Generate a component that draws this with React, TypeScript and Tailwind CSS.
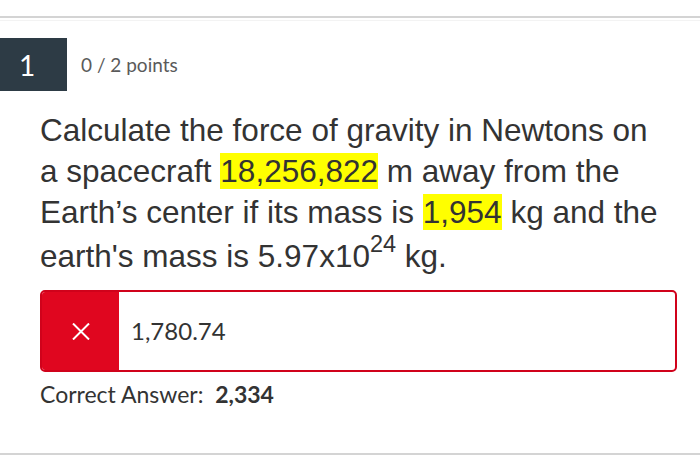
import React from 'react';

const lato = { fontFamily: 'Lato, "Open Sans", sans-serif' };
const arial = { fontFamily: '"Liberation Sans", Arial, sans-serif' };

function Mark({ children }: { children: React.ReactNode }) {
  return <span className="bg-[#ffff00]">{children}</span>;
}

export default function App() {
  return (
    <div className="w-[700px] h-[466px] bg-white flex flex-col pt-4 overflow-hidden" style={lato}>
      {/* top rule */}
      <div className="h-[2px] bg-[#d4d4d4]" />
      <div className="h-px bg-[#f3f3f3] mt-[2px]" />

      {/* question header */}
      <div className="flex items-center mt-[17px]">
        <div className="w-[67px] h-[53px] bg-[#2d3b45] text-white text-[28px] flex items-center pl-[19px]">
          1
        </div>
        <span className="ml-[14px] text-[19px] text-[#5a5a5a] pt-[2px]">0 / 2 points</span>
      </div>

      {/* question text */}
      <p className="mt-[19px] ml-10 text-[31.5px] leading-[41px] text-[#333] whitespace-nowrap" style={arial}>
        Calculate the force of gravity in Newtons on
        <br />
        a spacecraft <Mark>18,256,822</Mark> m away from the
        <br />
        Earth’s center if its mass is <Mark>1,954</Mark> kg and the
        <br />
        earth's mass is 5.97x10<span className="text-[23.5px] leading-none align-[15px]">24</span> kg.
      </p>

      {/* answer */}
      <div className="mt-[13px] ml-10 mr-[23px] h-[82px] flex rounded-[5px] border-2 border-[#d0021b] overflow-hidden">
        <div className="w-[77px] bg-[#e0061f] flex items-center justify-center">
          <svg width="18" height="17" viewBox="0 0 18 17" fill="none" stroke="white" strokeWidth="2">
            <path d="M1 0.5 L17 16.5 M17 0.5 L1 16.5" />
          </svg>
        </div>
        <div className="flex items-center pl-[12px] text-[24px] text-[#333]">1,780.74</div>
      </div>

      <div className="mt-[5px] ml-10 text-[23px] text-[#333]">
        Correct Answer:&nbsp; <span className="font-bold">2,334</span>
      </div>

      {/* bottom rule */}
      <div className="mt-auto mb-[11px] h-[2px] bg-[#d4d4d4]" />
    </div>
  );
}
